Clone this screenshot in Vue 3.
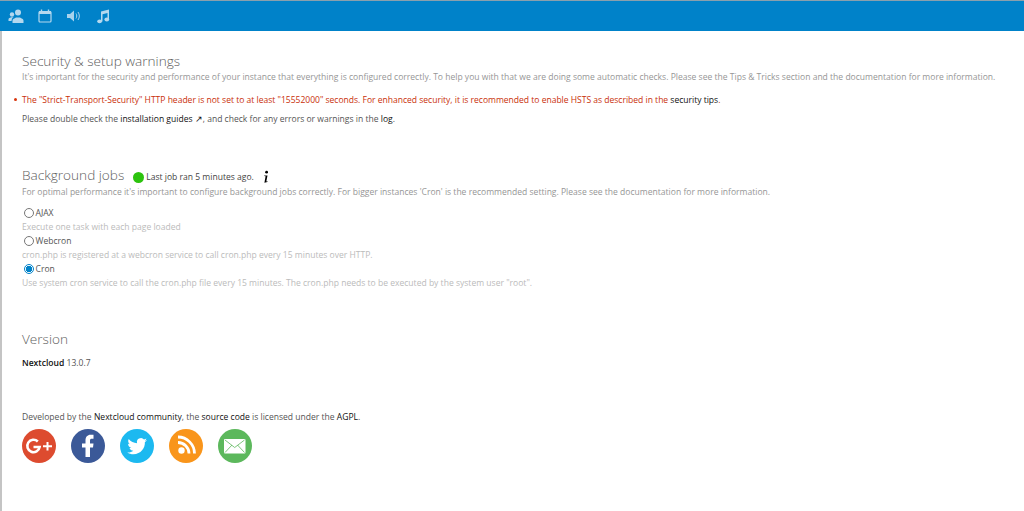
<template>
  <div class="page">
    <header class="top">
      <svg class="ic" viewBox="0 0 16 16" width="16" height="16"><g fill="#b4d8ee"><circle cx="10" cy="4.500" r="3"/><path d="M4.500 15v-2.500c0-1.500 2-2 3.500-3h4c1.500 1 3.500 1.500 3.500 3V15z"/><circle cx="4" cy="6.500" r="2.200"/><path d="M.5 13v-1.800c0-1 1.500-1.400 2.500-2h2.500L4 10.500 3.500 13z"/></g></svg>
      <svg class="ic" viewBox="0 0 16 16" width="16" height="16"><g fill="none" stroke="#b4d8ee" stroke-width="1.200"><rect x="2" y="3.500" width="12" height="10.500" rx="1"/></g><path d="M2 3h12v3H2z" fill="#b4d8ee"/><path d="M4.500 1.500v2M11.500 1.500v2" stroke="#b4d8ee" stroke-width="1.400"/></svg>
      <svg class="ic" viewBox="0 0 16 16" width="16" height="16"><path d="M1 6h3l4-3.500v11L4 10H1z" fill="#a8d2ec"/><path d="M10 5.500c1 1.500 1 3.500 0 5M12 4c1.800 2.500 1.800 5.500 0 8" fill="none" stroke="#a8d2ec" stroke-width="1"/></svg>
      <svg class="ic" viewBox="0 0 16 16" width="16" height="16"><path d="M6 3.500 14 1.500v10h-1.500V5L7.500 6.200V13.500H6z" fill="#b4d8ee"/><ellipse cx="4.600" cy="13.300" rx="2.400" ry="1.900" fill="#b4d8ee"/><ellipse cx="11.800" cy="11.500" rx="2.400" ry="1.900" fill="#b4d8ee"/></svg>
    </header>
    <main class="main">
      <section class="sec sec-sec">
        <h2>Security &amp; setup warnings</h2>
        <p class="hint">It's important for the security and performance of your instance that everything is configured correctly. To help you with that we are doing some automatic checks. Please see the Tips &amp; Tricks section and the documentation for more information.</p>
        <ul class="warn">
          <li>The "Strict-Transport-Security" HTTP header is not set to at least "15552000" seconds. For enhanced security, it is recommended to enable HSTS as described in the <a>security tips</a>.</li>
        </ul>
        <p class="body please">Please double check the <a>installation guides ↗</a>, and check for any errors or warnings in the <a>log</a>.</p>
      </section>
      <section class="sec sec-bg">
        <div class="bg-head">
          <h2>Background jobs</h2>
          <span class="dot"></span>
          <span class="last">Last job ran 5 minutes ago.</span>
          <svg class="info" viewBox="0 0 16 16" width="16" height="16"><circle cx="8.600" cy="3.200" r="1.400" fill="#000"/><path d="M6.200 6.500h3.300L8.300 12.500l1.300-.3-.2.800-3 .7 1.200-6.500-1.400-.1z" fill="#000"/></svg>
        </div>
        <p class="hint hint2">For optimal performance it's important to configure background jobs correctly. For bigger instances 'Cron' is the recommended setting. Please see the documentation for more information.</p>
        <div class="opts">
          <div class="opt" v-for="o in opts" :key="o.name">
            <label class="radio-row"><span class="radio" :class="{ on: o.on }"></span>{{ o.name }}</label>
            <p class="desc">{{ o.desc }}</p>
          </div>
        </div>
      </section>
      <section class="sec sec-ver">
        <h2>Version</h2>
        <p class="body ver"><strong>Nextcloud</strong> 13.0.7</p>
      </section>
      <p class="body dev">Developed by the <a>Nextcloud community</a>, the <a>source code</a> is licensed under the <a>AGPL</a>.</p>
      <div class="social">
        <svg viewBox="0 0 34 34" width="34" height="34"><circle cx="17" cy="17" r="17" fill="#dd4b2f"/><path d="M15.800 12.500a6.200 6.200 0 1 0 1.800 5.500H11.500" fill="none" stroke="#fff" stroke-width="2.600"/><path d="M21 17.300h9M25.500 13v8.500" stroke="#fff" stroke-width="2"/></svg>
        <svg viewBox="0 0 34 34" width="34" height="34"><circle cx="17" cy="17" r="17" fill="#3b5998"/><path d="M14.500 28V18.500H11v-4h3.500V11.500C14.500 8 16.500 5.800 19.500 5.800H22.500v4h-1.800c-1.200 0-1.700.6-1.700 1.700v3h3.500l-.5 4H19V28z" fill="#fff"/></svg>
        <svg viewBox="0 0 34 34" width="34" height="34"><circle cx="17" cy="17" r="17" fill="#1cb9f0"/><path d="M27 11c-.8.400-1.500.6-2.300.7.800-.5 1.500-1.300 1.800-2.200-.8.500-1.600.8-2.500 1a4 4 0 0 0-6.900 3.700C13.700 14 10.700 12.400 8.700 10c-1 1.800-.5 4.100 1.200 5.300-.6 0-1.200-.2-1.800-.5 0 2 1.400 3.700 3.200 4.100-.6.200-1.200.2-1.800.1.500 1.600 2 2.800 3.800 2.800-1.700 1.400-4 2-6.100 1.700 1.800 1.200 4 1.800 6.200 1.800 7.500 0 11.800-6.300 11.500-12.200.8-.5 1.500-1.200 2.100-2.100z" fill="#fff"/></svg>
        <svg viewBox="0 0 34 34" width="34" height="34"><circle cx="17" cy="17" r="17" fill="#f9951b"/><circle cx="12.500" cy="21.500" r="3.200" fill="#fff"/><path d="M9 13.500c6 0 11 5 11 11M9 8c9 0 16.500 7.500 16.500 16.500" fill="none" stroke="#fff" stroke-width="2.800"/></svg>
        <svg viewBox="0 0 34 34" width="34" height="34"><circle cx="17" cy="17" r="17" fill="#5cb85c"/><rect x="6" y="10" width="21.500" height="14.500" rx="1" fill="#fff"/><path d="M7 11l9.700 7.500 9.800-7.500M7 23.500l7-7.500M26.500 23.500l-7-7.500" fill="none" stroke="#5cb85c" stroke-width="0.800"/></svg>
      </div>
    </main>
  </div>
</template>

<script setup>
const opts = [
  { name: 'AJAX', desc: 'Execute one task with each page loaded', on: false },
  { name: 'Webcron', desc: 'cron.php is registered at a webcron service to call cron.php every 15 minutes over HTTP.', on: false },
  { name: 'Cron', desc: 'Use system cron service to call the cron.php file every 15 minutes. The cron.php needs to be executed by the system user "root".', on: true },
]
</script>

<style>
html, body { margin: 0; background: #fff; }
</style>

<style scoped>
.page { width: 1024px; height: 511px; overflow: hidden; font-family: "Open Sans", sans-serif; font-size: 8.56px; line-height: 14px; color: #555; background: #fff; }
.top { height: 30px; background: #0082c9; border-top: 1px solid #8aa0ad; display: flex; align-items: center; gap: 13px; padding-left: 8px; box-sizing: content-box; }
.ic { flex: none; margin-top: -1px; }
.main { height: 480px; border-left: 2px solid #c4c4c4; padding-left: 20px; box-sizing: border-box; }
h2 { margin: 0; font-size: 13.600px; font-weight: 300; line-height: 20px; color: #606060; }
p { margin: 0; white-space: nowrap; }
.hint { color: #969696; margin-top: -1px; }
.sec-sec { padding-top: 20px; }
.warn { margin: 9px 0 0; padding: 0; list-style: none; color: #c9300a; position: relative; white-space: nowrap; letter-spacing: -0.012px; }
.warn li::before { content: ""; position: absolute; left: -8px; top: 5px; width: 3px; height: 3px; border-radius: 50%; background: #d8340c; }
.warn a { color: #111; }
.body { color: #555; margin-top: 7px; }
.please { margin-top: 5px; }
a { color: #111; }
.sec-bg { padding-top: 39px; }
.bg-head { display: flex; align-items: center; }
.dot { width: 11px; height: 11px; border-radius: 50%; background: #2cc30e; margin: 4px 2px 0 9px; }
.last { color: #444; margin-top: 4px; }
.info { margin: 3px 0 0 4px; }
.hint2 { margin-top: 0; }
.opts { margin-top: 7px; }
.radio-row { display: flex; align-items: center; height: 14px; color: #555; }
.radio { box-sizing: border-box; width: 10px; height: 10px; border-radius: 50%; border: 1px solid #777; margin: 0 2px 0 1.5px; }
.radio.on { border-color: #0082c9; background: radial-gradient(circle, #0082c9 0 3px, #fff 3.500px); }
.desc { color: #bbb; height: 14px; }
.sec-ver { padding-top: 39px; }
.ver { margin-top: 7px; }
strong { color: #111; font-weight: 600; }
.dev { margin-top: 40px; }
.social { display: flex; gap: 15px; margin-top: 5px; }
</style>
